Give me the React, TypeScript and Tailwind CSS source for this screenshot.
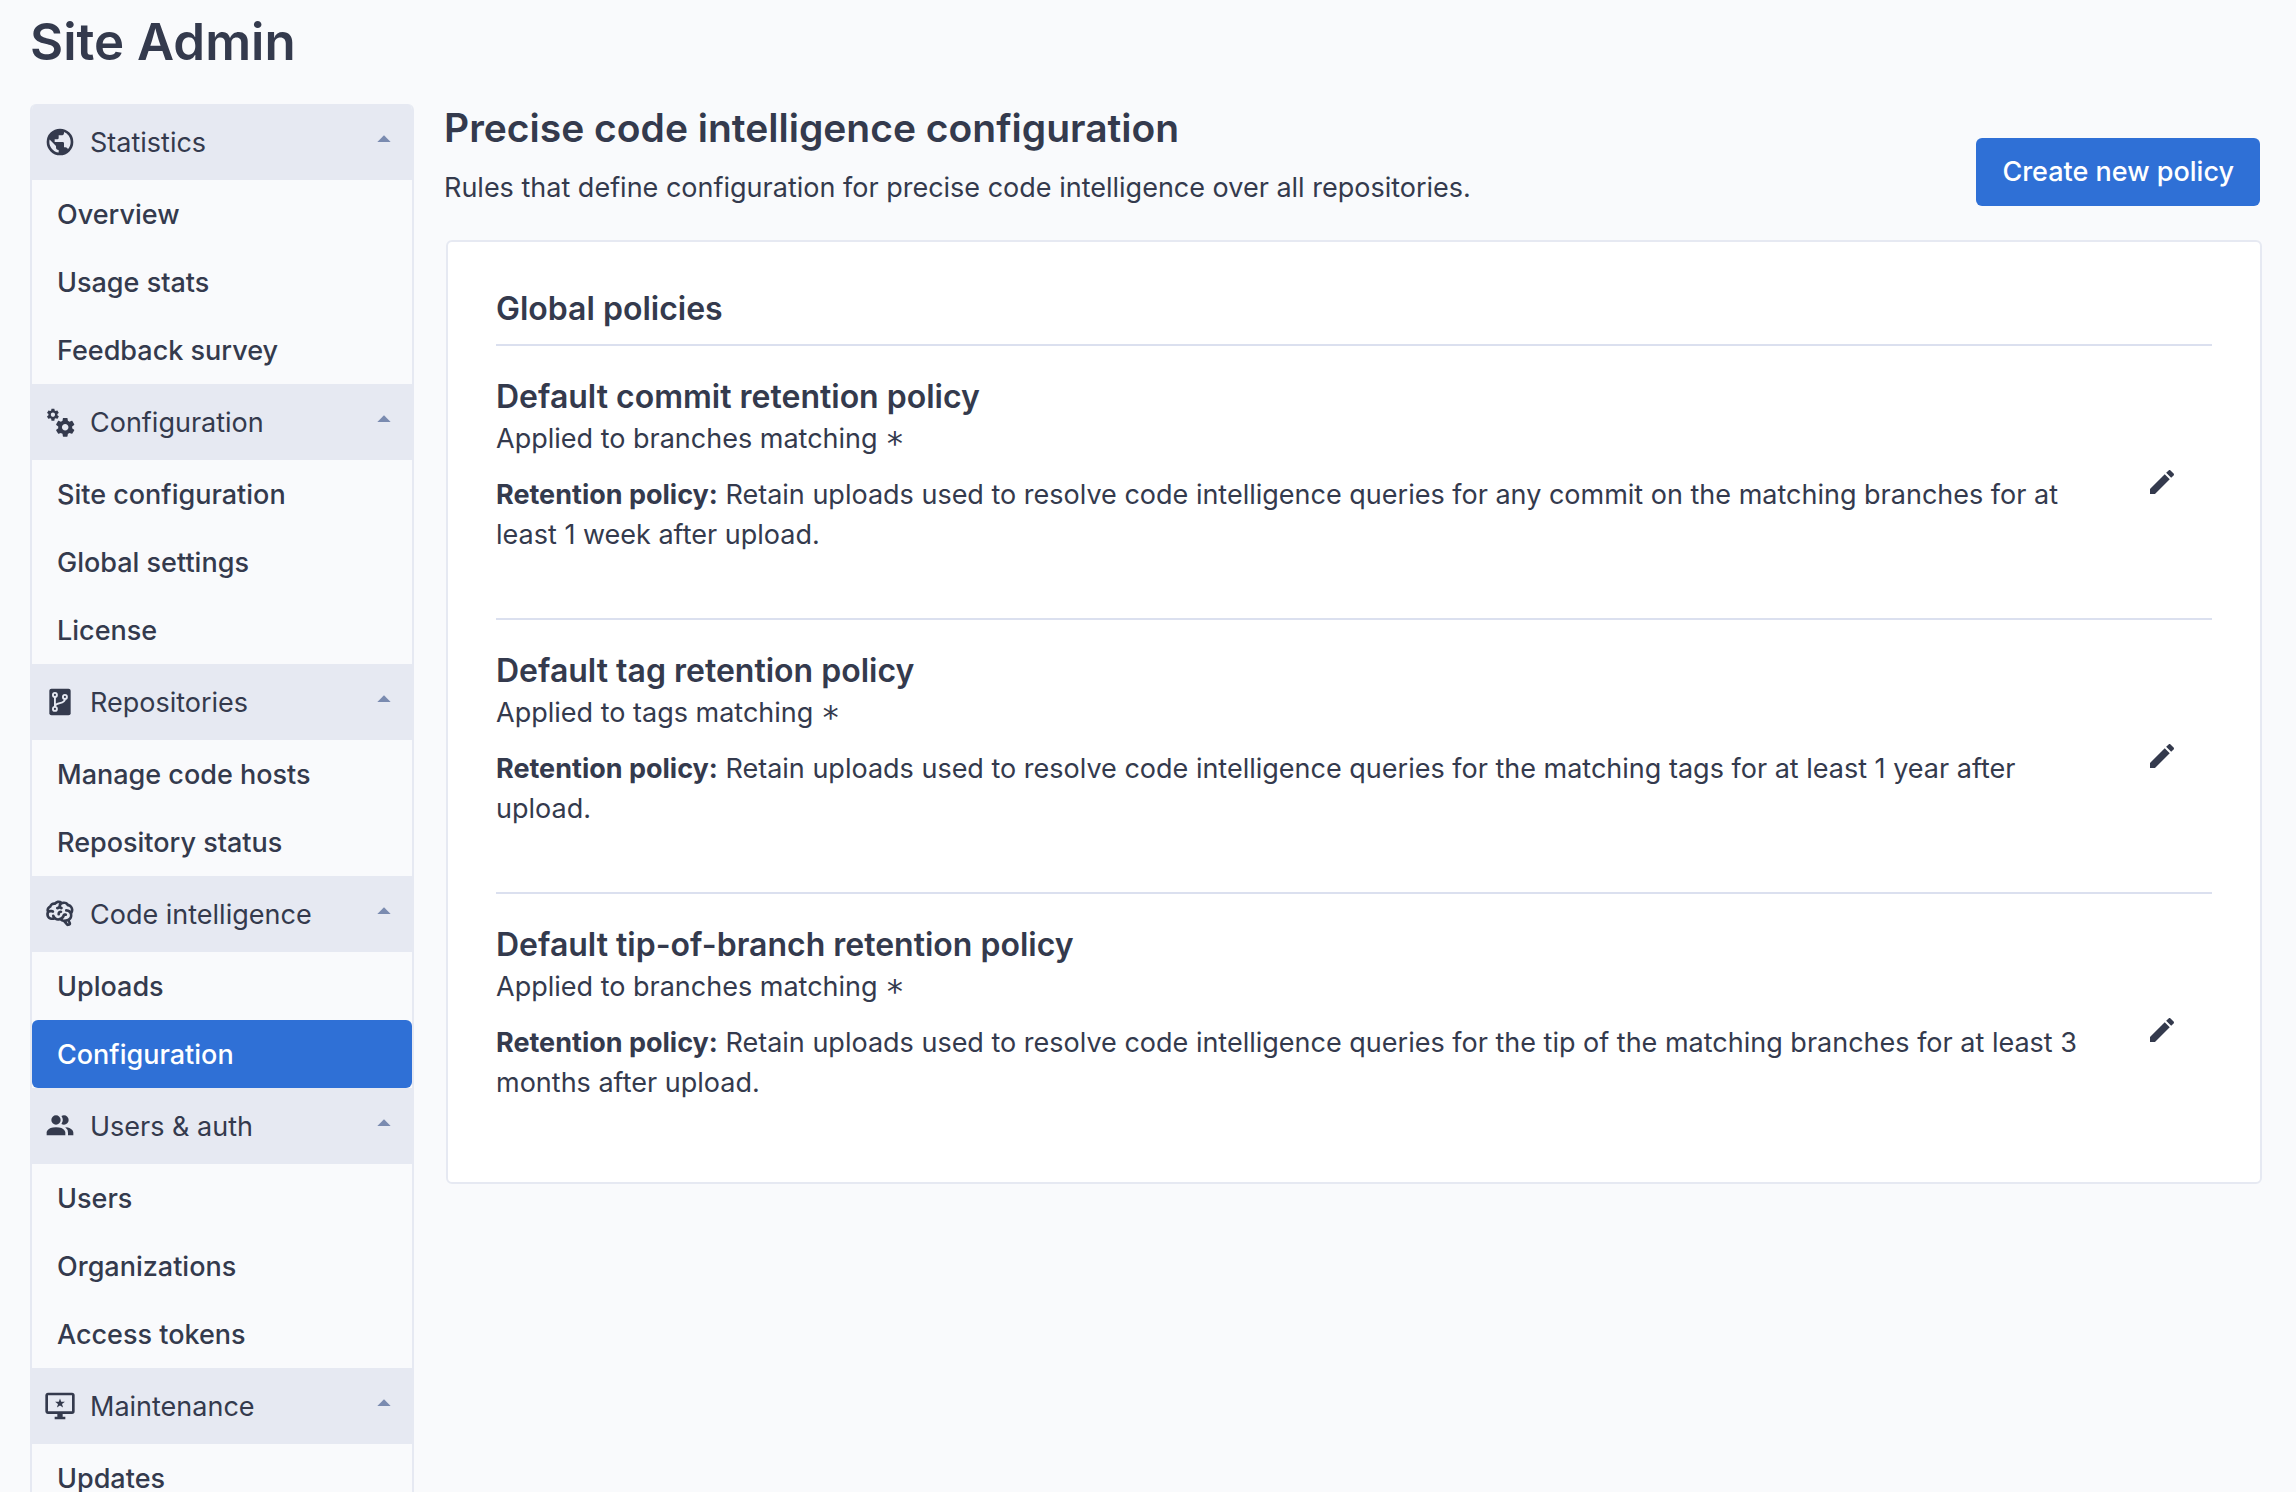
import React from 'react'

const icons = {
  earth: (
    <path d="M17.9,17.39C17.64,16.59 16.89,16 16,16H15V13A1,1 0 0,0 14,12H8V10H10A1,1 0 0,0 11,9V7H13A2,2 0 0,0 15,5V4.59C17.93,5.77 20,8.64 20,12C20,14.08 19.2,15.97 17.9,17.39M11,19.93C7.05,19.44 4,16.08 4,12C4,11.38 4.08,10.78 4.21,10.21L9,15V16A2,2 0 0,0 11,18M12,2A10,10 0 0,0 2,12A10,10 0 0,0 12,22A10,10 0 0,0 22,12A10,10 0 0,0 12,2Z" />
  ),
  cogs: (
    <path d="M15.9,18.45C17.25,18.45 18.35,17.35 18.35,16C18.35,14.65 17.25,13.55 15.9,13.55C14.54,13.55 13.45,14.65 13.45,16C13.45,17.35 14.54,18.45 15.9,18.45M21.1,16.68L22.58,17.84C22.71,17.95 22.75,18.13 22.66,18.29L21.26,20.71C21.17,20.86 21,20.92 20.83,20.86L19.09,20.16C18.73,20.44 18.33,20.67 17.91,20.85L17.64,22.7C17.62,22.87 17.47,23 17.3,23H14.5C14.32,23 14.18,22.87 14.15,22.7L13.89,20.85C13.46,20.67 13.07,20.44 12.71,20.16L10.96,20.86C10.81,20.92 10.62,20.86 10.54,20.71L9.14,18.29C9.05,18.13 9.09,17.95 9.22,17.84L10.7,16.68L10.65,16L10.7,15.31L9.22,14.16C9.09,14.05 9.05,13.86 9.14,13.71L10.54,11.29C10.62,11.13 10.81,11.07 10.96,11.13L12.71,11.84C13.07,11.56 13.46,11.32 13.89,11.15L14.15,9.29C14.18,9.13 14.32,9 14.5,9H17.3C17.47,9 17.62,9.13 17.64,9.29L17.91,11.15C18.33,11.32 18.73,11.56 19.09,11.84L20.83,11.13C21,11.07 21.17,11.13 21.26,11.29L22.66,13.71C22.75,13.86 22.71,14.05 22.58,14.16L21.1,15.31L21.15,16L21.1,16.68M6.69,8.07C7.56,8.07 8.26,7.37 8.26,6.5C8.26,5.63 7.56,4.92 6.69,4.92C5.82,4.92 5.12,5.63 5.12,6.5C5.12,7.37 5.83,8.07 6.69,8.07M10.03,6.94L11,7.68C11.07,7.75 11.09,7.87 11.03,7.97L10.13,9.53C10.08,9.63 9.96,9.67 9.86,9.63L8.74,9.18L8,9.62L7.81,10.81C7.79,10.92 7.7,11 7.59,11H5.79C5.67,11 5.58,10.92 5.56,10.81L5.4,9.62L4.64,9.18L3.52,9.63C3.41,9.67 3.3,9.63 3.24,9.53L2.34,7.97C2.28,7.87 2.31,7.75 2.39,7.68L3.34,6.94L3.31,6.5L3.34,6.06L2.39,5.32C2.31,5.25 2.28,5.13 2.34,5.03L3.24,3.47C3.3,3.37 3.41,3.33 3.52,3.37L4.63,3.82L5.4,3.38L5.56,2.19C5.58,2.08 5.67,2 5.79,2H7.59C7.7,2 7.79,2.08 7.81,2.19L8,3.38L8.74,3.82L9.86,3.37C9.96,3.33 10.08,3.37 10.13,3.47L11.03,5.03C11.09,5.13 11.07,5.25 11,5.32L10.03,6.06L10.06,6.5L10.03,6.94Z" />
  ),
  repository: (
    <>
      <rect x="4" y="2" width="16" height="20" rx="1.6" />
      <g fill="none" stroke="#e6e9f2" strokeWidth="1.4">
        <circle cx="8.2" cy="6.7" r="1.5" />
        <circle cx="15.7" cy="8.2" r="1.5" />
        <circle cx="8.2" cy="17.2" r="1.5" />
        <path d="M8.2,8.2V15.7M15.7,9.7C15.7,13.6 9.6,12 8.2,14.8" />
      </g>
    </>
  ),
  brain: (
    <path d="M21.33,12.91C21.42,14.46 20.71,15.95 19.44,16.86L20.21,18.35C20.44,18.8 20.47,19.33 20.27,19.8C20.08,20.27 19.69,20.64 19.21,20.8L18.42,21.05C18.25,21.11 18.06,21.14 17.88,21.14C17.37,21.14 16.89,20.91 16.56,20.5L14.44,18C13.55,17.85 12.71,17.47 12,16.9C11.5,17.05 11,17.13 10.5,17.13C9.62,17.13 8.74,16.86 8,16.34C7.47,16.5 6.93,16.57 6.38,16.56C5.59,16.57 4.81,16.41 4.08,16.11C2.65,15.47 1.7,14.07 1.65,12.5C1.57,11.78 1.69,11.05 2,10.39C1.71,9.64 1.68,8.82 1.93,8.06C2.3,7.11 3,6.32 3.87,5.82C4.45,4.13 6.08,3 7.87,3.12C9.47,1.62 11.92,1.46 13.7,2.75C14.12,2.64 14.56,2.58 15,2.58C16.36,2.55 17.65,3.15 18.5,4.22C20.54,4.75 22,6.57 22.08,8.69C22.13,9.8 21.83,10.89 21.22,11.82C21.29,12.18 21.33,12.54 21.33,12.91M16.33,11.5C16.9,11.57 17.35,12 17.35,12.57A1,1 0 0,1 16.35,13.57H15.72C15.4,14.47 14.84,15.26 14.1,15.86C14.35,15.95 14.61,16 14.87,16.07C20,16 19.4,12.87 19.4,12.82C19.34,11.39 18.14,10.27 16.71,10.33A1,1 0 0,1 15.71,9.33A1,1 0 0,1 16.71,8.33C17.94,8.36 19.12,8.82 20.04,9.63C20.09,9.34 20.12,9.04 20.12,8.74C20.06,7.5 19.5,6.42 17.25,6.21C16,3.25 12.85,4.89 12.85,5.81V5.81C12.82,6.04 13.06,6.53 13.1,6.56A1,1 0 0,1 14.1,7.56C14.1,8.11 13.65,8.56 13.1,8.56V8.56C12.57,8.54 12.07,8.34 11.67,8C11.19,8.31 10.64,8.5 10.07,8.56V8.56C9.5,8.61 9.03,8.21 9,7.66C8.92,7.1 9.33,6.61 9.88,6.56C10.04,6.54 10.82,6.42 10.82,5.79V5.79C10.82,5.13 11.07,4.5 11.5,4C10.58,3.75 9.59,4.08 8.59,5.29C6.75,5 6,5.25 5.45,7.2C4.5,7.67 4,8 3.78,9C4.86,8.78 5.97,8.87 7,9.25C7.5,9.44 7.78,10 7.59,10.54C7.4,11.06 6.82,11.32 6.3,11.13C5.57,10.81 4.75,10.79 4,11.07C3.68,11.34 3.68,11.9 3.68,12.34C3.68,13.08 4.05,13.77 4.68,14.17C5.21,14.44 5.8,14.58 6.39,14.57C6.24,14.31 6.11,14.04 6,13.76C5.81,13.22 6.1,12.63 6.64,12.44C7.18,12.25 7.77,12.54 7.96,13.08C8.36,14.22 9.38,15 10.58,15.13C11.95,15.06 13.17,14.25 13.77,13C14,11.62 15.11,11.5 16.33,11.5M18.33,18.97L17.71,17.67L17,17.83L18,19.08L18.33,18.97M13.68,10.36C13.7,9.83 13.3,9.38 12.77,9.33C12.06,9.29 11.37,9.53 10.84,10C10.27,10.58 9.97,11.38 10,12.19A1,1 0 0,0 11,13.19C11.57,13.19 12,12.74 12,12.19C12,11.92 12.07,11.65 12.23,11.43C12.35,11.33 12.5,11.28 12.66,11.28C13.21,11.31 13.68,10.9 13.68,10.36Z" />
  ),
  users: (
    <path d="M16 17V19H2V17S2 13 9 13 16 17 16 17M12.5 7.5A3.5 3.5 0 1 0 9 11A3.5 3.5 0 0 0 12.5 7.5M15.94 13A5.32 5.32 0 0 1 18 17V19H22V17S22 13.37 15.94 13M15 4A3.39 3.39 0 0 0 13.07 4.59A5 5 0 0 1 13.07 10.41A3.39 3.39 0 0 0 15 11A3.5 3.5 0 0 0 15 4Z" />
  ),
  monitor: (
    <path d="M21,16V4H3V16H21M21,2A2,2 0 0,1 23,4V16A2,2 0 0,1 21,18H14V20H16V22H8V20H10V18H3C1.89,18 1,17.1 1,16V4C1,2.89 1.89,2 3,2H21M12,6.3L12.9,8.9H15.7L13.5,10.5L14.3,13.2L12,11.6L9.7,13.2L10.5,10.5L8.3,8.9H11.1Z" />
  ),
  menuUp: <path d="M7,15L12,10L17,15H7Z" />,
  pencil: (
    <path d="M20.71,7.04C21.1,6.65 21.1,6 20.71,5.63L18.37,3.29C18,2.9 17.35,2.9 16.96,3.29L15.12,5.12L18.87,8.87M3,17.25V21H6.75L17.81,9.93L14.06,6.18L3,17.25Z" />
  ),
}

type IconName = keyof typeof icons

function Icon({ name, className = '' }: { name: IconName; className?: string }) {
  return (
    <svg viewBox="0 0 24 24" fill="currentColor" aria-hidden="true" className={`size-8 shrink-0 ${className}`}>
      {icons[name]}
    </svg>
  )
}

interface Section {
  title: string
  icon: IconName
  items: { label: string; active?: boolean }[]
}

const sections: Section[] = [
  { title: 'Statistics', icon: 'earth', items: [{ label: 'Overview' }, { label: 'Usage stats' }, { label: 'Feedback survey' }] },
  { title: 'Configuration', icon: 'cogs', items: [{ label: 'Site configuration' }, { label: 'Global settings' }, { label: 'License' }] },
  { title: 'Repositories', icon: 'repository', items: [{ label: 'Manage code hosts' }, { label: 'Repository status' }] },
  { title: 'Code intelligence', icon: 'brain', items: [{ label: 'Uploads' }, { label: 'Configuration', active: true }] },
  { title: 'Users & auth', icon: 'users', items: [{ label: 'Users' }, { label: 'Organizations' }, { label: 'Access tokens' }] },
  { title: 'Maintenance', icon: 'monitor', items: [{ label: 'Updates' }] },
]

const policies = [
  {
    name: 'Default commit retention policy',
    target: 'branches',
    text: 'Retain uploads used to resolve code intelligence queries for any commit on the matching branches for at least 1 week after upload.',
  },
  {
    name: 'Default tag retention policy',
    target: 'tags',
    text: 'Retain uploads used to resolve code intelligence queries for the matching tags for at least 1 year after upload.',
  },
  {
    name: 'Default tip-of-branch retention policy',
    target: 'branches',
    text: 'Retain uploads used to resolve code intelligence queries for the tip of the matching branches for at least 3 months after upload.',
  },
]

function Sidebar() {
  return (
    <nav aria-label="Site admin" className="w-96 shrink-0 overflow-hidden rounded-t-md border-x-2 border-[#e6e9f2]">
      {sections.map(section => (
        <section key={section.title}>
          <button type="button" aria-expanded="true" className="flex h-19 w-full items-center bg-[#e6e9f2] px-3 text-left">
            <Icon name={section.icon} />
            <span className="ml-3.5 flex-1 pt-0.5">{section.title}</span>
            <Icon name="menuUp" className="mb-2 text-[#7a8bb0]" />
          </button>
          <ul>
            {section.items.map(item => (
              <li key={item.label}>
                <a
                  href="#"
                  aria-current={item.active ? 'page' : undefined}
                  className={`flex h-17 items-center px-[25px] pt-0.5 font-medium ${item.active ? 'rounded-md bg-[#2f70d6] text-white' : ''}`}
                >
                  {item.label}
                </a>
              </li>
            ))}
          </ul>
        </section>
      ))}
    </nav>
  )
}

export default function App() {
  return (
    <div className="h-screen overflow-hidden bg-[#f9fafc] px-[30px] pt-3 font-['Inter',sans-serif] text-[27px] leading-10 text-[#343a4d]">
      <h1 className="text-[51px] leading-[60px] font-semibold">Site Admin</h1>
      <div className="mt-8 flex items-start gap-[30px]">
        <Sidebar />
        <main className="min-w-0 flex-1 pr-1">
          <header className="flex items-end justify-between pr-0.5">
            <div>
              <h2 className="mb-4 text-[39px] leading-12 font-semibold">Precise code intelligence configuration</h2>
              <p>Rules that define configuration for precise code intelligence over all repositories.</p>
            </div>
            <button type="button" className="mb-0.5 h-17 rounded-md bg-[#2f70d6] px-[26px] font-medium text-white">
              Create new policy
            </button>
          </header>
          <div className="mt-8 ml-0.5 rounded-md border-2 border-[#e6e9f2] bg-white px-12 pt-12 pb-4">
            <h3 className="mb-4 text-[32px] leading-[38px] font-semibold">Global policies</h3>
            {policies.map(policy => (
              <article key={policy.name} className="flex items-center justify-between border-t-2 border-[#dbe0ef] pr-[34px]">
                <div className="w-full max-w-[1616px] pt-[33px] pb-[63px]">
                  <h4 className="mb-1 text-[32px] leading-9 font-semibold">{policy.name}</h4>
                  <p className="mb-4">
                    Applied to {policy.target} matching{' '}
                    <code className="align-sub font-['DejaVu_Sans_Mono',monospace] text-[32px] leading-4">*</code>
                  </p>
                  <p>
                    <strong className="font-bold">Retention policy:</strong> {policy.text}
                  </p>
                </div>
                <button type="button" aria-label={`Edit ${policy.name}`}>
                  <Icon name="pencil" />
                </button>
              </article>
            ))}
          </div>
        </main>
      </div>
    </div>
  )
}
